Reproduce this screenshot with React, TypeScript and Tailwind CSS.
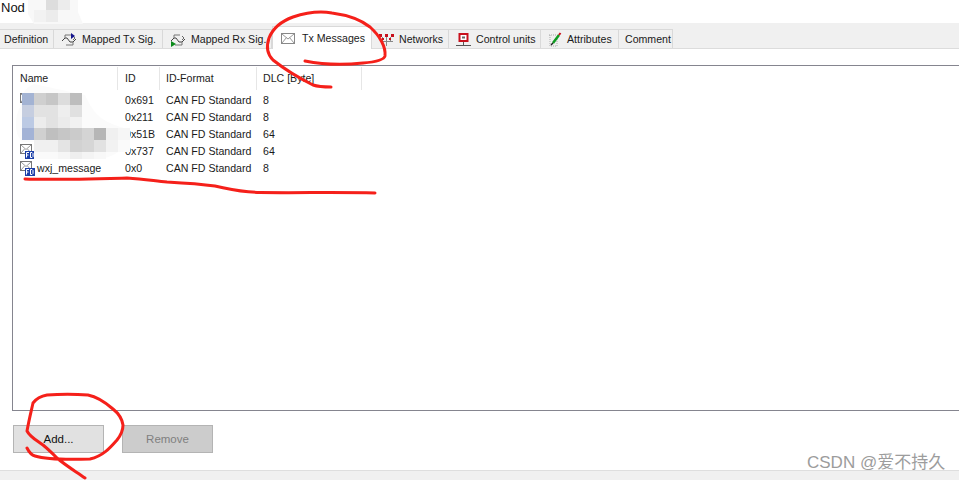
import React from "react";

const rows = [
  { name: "", id: "0x691", dlc: "8" },
  { name: "", id: "0x211", dlc: "8" },
  { name: "", id: "0x51B", dlc: "64" },
  { name: "", id: "0x737", dlc: "64" },
  { name: "wxj_message", id: "0x0", dlc: "8" },
];

// mosaic cells over the blurred names, null leaves the cell open
const cols = [22, 34, 46, 58, 70, 82, 94, 106, 118];
const ys = [93, 105, 117, 128, 140, 152];
const mosaic: (string | null)[][] = [
  ["#a3b3d3", "#cfcfcf", "#c6c6c6", "#dcdcdc", "#bdbdbd"],
  ["#c6cee0", "#e2e2e2", "#e2e2e2", "#eeeeee", "#e0e0e0"],
  ["#bccae4", "#ececec", "#e2e2e2", "#ebebeb", "#f1f1f1"],
  ["#a3b3d6", "#d0d0d0", "#bfbfbf", "#c6c6c6", "#cbcbcb", "#d4d4d4", "#b6b6b6", "#f0f0f0", "#f6f6f6"],
  [null, "#f0f0f0", "#f0f0f0", "#e4e4e4", "#d2d2d2", "#d6d6d6", "#e2e2e2", "#f2f2f2", "#fafafa"],
  [null, "#fafafa", "#fafafa", "#f6f6f6", "#eeeeee", "#f4f4f4", "#f8f8f8"],
];

function Envelope() {
  return (
    <svg width="14" height="11" viewBox="0 0 14 11" className="shrink-0">
      <rect x="0.5" y="0.5" width="13" height="10" fill="#fff" stroke="#888" />
      <path d="M1 1l6 5 6-5M1 10l4.5-5.5M13 10L8.5 4.5" fill="none" stroke="#999" />
    </svg>
  );
}

function MsgIcon() {
  return (
    <svg width="15" height="15" viewBox="0 0 15 15" className="shrink-0">
      <rect x="0.5" y="0.5" width="11" height="9" fill="#fff" stroke="#777" />
      <path d="M1 1l5 4.5L11 1M1 9l3.5-4M11 9L7.5 5" fill="none" stroke="#999" />
      <rect x="5" y="7" width="10" height="8" fill="#1c3fa8" />
      <path d="M6.5 13.5v-5h2.5M6.5 11h2M10.5 8.5v5h1.5l1-1v-3l-1-1z" fill="none" stroke="#fff" />
    </svg>
  );
}

function SigIcon({ rx }: { rx?: boolean }) {
  return (
    <svg width="16" height="14" viewBox="0 0 16 14" className="shrink-0">
      <path d="M1 8l3-3h2l3 4h3l3-3" fill="none" stroke="#444" />
      <path d="M4 5V2h6M12 9v3H5" fill="none" stroke="#777" />
      <path d="M12 3l2 2-2 2" fill="none" stroke="#666" />
      {rx ? <path d="M1 8l5 3-5 3z" fill="#0a8a1a" /> : <path d="M10 0l4 3-4 3z" fill="#14148c" />}
    </svg>
  );
}

function NetIcon() {
  return (
    <svg width="15" height="14" viewBox="0 0 15 14" className="shrink-0">
      <path d="M1 8.500h13M3.500 4v4.500M7.500 4v9M11.500 4v4.500" stroke="#888" fill="none" />
      <rect x="0" y="1" width="3" height="3" fill="#c8101c" />
      <rect x="6" y="1" width="3" height="3" fill="#c8101c" />
      <rect x="12" y="1" width="3" height="3" fill="#c8101c" />
      <rect x="3" y="5" width="2" height="2" fill="#c8101c" />
      <rect x="10" y="5" width="2" height="2" fill="#c8101c" />
    </svg>
  );
}

function UnitIcon() {
  return (
    <svg width="15" height="14" viewBox="0 0 15 14" className="shrink-0">
      <rect x="3.500" y="1" width="8" height="7" fill="#fff" stroke="#c8101c" strokeWidth="2" />
      <rect x="6" y="3.500" width="3" height="2" fill="#666" />
      <path d="M7.500 9v3M0 12.500h15" stroke="#555" fill="none" />
    </svg>
  );
}

function AttrIcon() {
  return (
    <svg width="14" height="15" viewBox="0 0 14 15" className="shrink-0">
      <path d="M1 3h7M2 3v11h7V6" stroke="#aaa" strokeDasharray="1 1" fill="none" />
      <path d="M5 11l6-8" stroke="#0e9a20" strokeWidth="2.500" fill="none" />
      <path d="M11 3l1.500-2" stroke="#c8101c" strokeWidth="2" fill="none" />
      <path d="M3 13l2-2" stroke="#222" strokeWidth="1.500" fill="none" />
    </svg>
  );
}

function Tab({ w, label, icon, pad = "pl-[7px]" }: { w: string; label: string; icon?: React.ReactNode; pad?: string }) {
  return (
    <div className={`${w} ${pad} h-[19px] pt-px flex items-center gap-[5px] border-t border-r border-[#d9d9d9] bg-[#f0f0f0] whitespace-nowrap`}>
      {icon}
      <span>{label}</span>
    </div>
  );
}

function Btn({ label, disabled }: { label: string; disabled?: boolean }) {
  return (
    <div className={`w-[91px] h-[28px] pt-px flex items-center justify-center border border-[#b4b4b4] text-[11.5px] ${disabled ? "bg-[#cccccc] text-[#7f7f7f]" : "bg-[#e1e1e1] text-[#111]"}`}>
      {label}
    </div>
  );
}

export default function App() {
  return (
    <div className="relative w-[959px] h-[480px] overflow-hidden bg-white flex flex-col text-[10.6px] leading-none text-[#1a1a1a] font-['Liberation_Sans',sans-serif]">
      <div className="h-[23px] pl-[1px] pt-px text-[13px] leading-[14px] text-[#111] overflow-hidden">Nod</div>

      {/* tab strip */}
      <div className="h-[26px] bg-[#f0f0f0] border-b border-[#dcdcdc] flex items-end">
        <Tab w="w-[54px]" label="Definition" pad="pl-[4px]" />
        <Tab w="w-[109px]" label="Mapped Tx Sig." icon={<SigIcon />} />
        <Tab w="w-[109px]" label="Mapped Rx Sig." icon={<SigIcon rx />} />
        <div className="w-[100px] h-[23px] -mb-px pl-[8px] flex items-center gap-[7px] bg-white border-t border-x border-[#d9d9d9] whitespace-nowrap">
          <Envelope />
          <span>Tx Messages</span>
        </div>
        <Tab w="w-[77px]" label="Networks" icon={<NetIcon />} />
        <Tab w="w-[92px]" label="Control units" icon={<UnitIcon />} />
        <Tab w="w-[78px]" label="Attributes" icon={<AttrIcon />} />
        <Tab w="w-[54px]" label="Comment" pad="pl-[6px]" />
      </div>

      {/* message list */}
      <div className="ml-[12px] mt-[16px] h-[346px] border border-[#85858f] border-r-0 pt-px">
        <div className="h-[23px] flex items-center">
          <div className="w-[105px] h-full pl-[7px] flex items-center border-r border-[#e6e6e6]">Name</div>
          <div className="w-[42px] h-full pl-[7px] flex items-center border-r border-[#e6e6e6]">ID</div>
          <div className="w-[97px] h-full pl-[6px] flex items-center border-r border-[#e6e6e6]">ID-Format</div>
          <div className="w-[105px] h-full pl-[6px] flex items-center border-r border-[#e6e6e6]">DLC [Byte]</div>
        </div>
        <div className="pt-[2px]">
          {rows.map(r => (
            <div key={r.id} className="h-[17px] flex items-center">
              <div className="w-[105px] pl-[7px] flex items-center gap-[2px]">
                <MsgIcon />
                <span>{r.name}</span>
              </div>
              <div className="w-[42px] pl-[7px]">{r.id}</div>
              <div className="w-[97px] pl-[6px] whitespace-nowrap">CAN FD Standard</div>
              <div className="pl-[6px]">{r.dlc}</div>
            </div>
          ))}
        </div>
      </div>

      <div className="ml-[13px] mt-[14px] flex gap-[18px]">
        <Btn label="Add..." />
        <Btn label="Remove" disabled />
      </div>

      <div className="mt-auto h-[10px] bg-[#f0f0f0] border-t border-[#dedede]" />

      <div className="absolute left-[807px] top-[453px] text-[17px] leading-[20px] text-[#9c9c9c] whitespace-nowrap font-['Liberation_Sans','Noto_Sans_CJK_SC',sans-serif]">
        CSDN @爱不持久
      </div>

      {/* blur patches and red marker strokes drawn over the screenshot */}
      <svg width="959" height="480" viewBox="0 0 959 480" className="absolute left-0 top-0 pointer-events-none">
        <path d="M28 0h50v12l5 12H34l-6-10z" fill="#f8f8f8" />
        <rect x="46" y="0" width="12" height="12" fill="#dddddd" />
        <rect x="34" y="10" width="12" height="12" fill="#f2f2f2" />
        <rect x="46" y="10" width="12" height="12" fill="#ececec" />
        <rect x="58" y="0" width="12" height="10" fill="#ececec" />
        <path d="M34 84 C26 88 22 92 22 100 L22 104 C16 112 14 126 18 136 L22 142 L34 142 L34 159 L100 159 C122 156 132 140 124 128 C105 122 95 118 85 95z" fill="#fbfbfb" />
        {mosaic.map((line, y) =>
          line.map((c, x) =>
            c ? <rect key={`${x}-${y}`} x={cols[x]} y={ys[y]} width="12" height={y === 5 ? 7 : ys[y + 1] - ys[y]} fill={c} /> : null,
          ),
        )}
        <g fill="none" stroke="#f5201a" strokeWidth="3" strokeLinecap="round" strokeLinejoin="round">
          <path d="M305 61C325 65 345 65 363 63C375 62 384 60 385 56C386 47 380 36 370 27C360 19 347 15 332 13C320 11 305 13 293 17C282 21 273 28 269 38C266 47 267 54 273 60C283 68 297 77 313 85C319 87 326 87 331 87" />
          <path d="M25 179C50 180 87 179 127 178C145 179 155 181 167 182C185 183 200 184 215 186C230 189 240 192 260 192.500C300 193 340 192 375 193" />
          <path d="M27 448C29 452 31 455 35 456C45 459 60 460 90 459C103 456 110 448 117 440C121 435 123 430 123 425C122 418 118 413 113 409C105 402 98 397 88 395C75 394 60 394 47 395C41 396 36 399 33 403C31 412 29 420 27 431C30 437 36 440 43 445C48 449 52 453 57 458C65 465 75 471 85 478" />
        </g>
      </svg>
    </div>
  );
}
